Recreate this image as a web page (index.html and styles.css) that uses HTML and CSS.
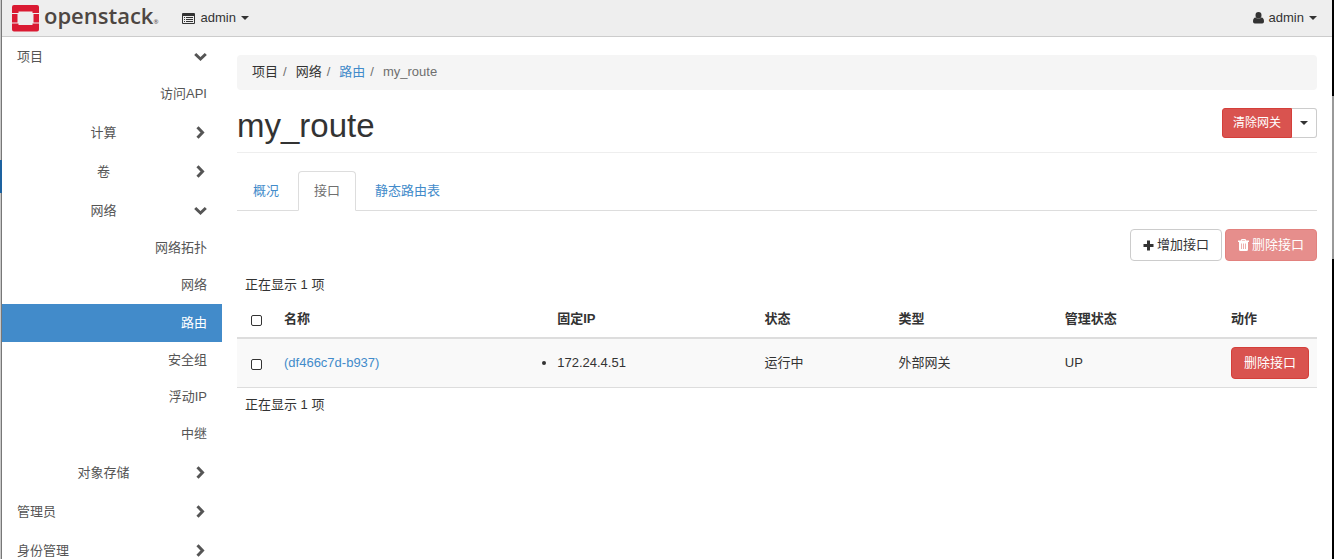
FILE: index.html
```html
<!DOCTYPE html>
<html lang="zh-CN">
<head>
    <meta charset="UTF-8">
    <meta name="viewport" content="width=device-width, initial-scale=1.0">
    <title>my_route - OpenStack Dashboard</title>
    <link rel="stylesheet" href="styles.css">
</head>
<body>
    <!-- shared icons -->
    <svg class="sprite" aria-hidden="true">
        <symbol id="chevron-down" viewBox="0 0 13 13">
            <path d="M1.2 4 L6.5 9 L11.8 4" fill="none" stroke="currentColor" stroke-width="3"/>
        </symbol>
        <symbol id="chevron-right" viewBox="0 0 13 13">
            <path d="M3.5 1.2 L8.5 6.5 L3.5 11.8" fill="none" stroke="currentColor" stroke-width="3"/>
        </symbol>
    </svg>

    <header class="navbar">
        <a href="#" class="brand" aria-label="openstack">
            <svg class="brand-mark" width="27" height="27" viewBox="0 0 27 27">
                <path fill="#da1a32" d="M2 0H25Q27 0 27 2V8H20.500V6.500H6.500V8H0V2Q0 0 2 0ZM0 18.500H6.500V20H20.500V18.500H27V24.500Q27 26.500 25 26.500H2Q0 26.500 0 24.500ZM0 9H5.500V17.500H0ZM21.500 9H27V17.500H21.500Z"/>
            </svg>
            <span class="brand-name">openstack<small>®</small></span>
        </a>
        <button type="button" class="nav-btn">
            <svg width="13" height="11" viewBox="0 0 13 11">
                <path fill="currentColor" fill-rule="evenodd" d="M1 0H12Q13 0 13 1V10Q13 11 12 11H1Q0 11 0 10V1Q0 0 1 0ZM1 3V10H12V3ZM2 4H3V5H2ZM4 4H11V5H4ZM2 6H3V7H2ZM4 6H11V7H4ZM2 8H3V9H2ZM4 8H11V9H4Z"/>
            </svg>
            admin <span class="caret"></span>
        </button>
        <button type="button" class="nav-btn nav-user">
            <svg width="11" height="12" viewBox="0 0 11 12">
                <path fill="currentColor" d="M5.500 0A3 3.200 0 1 1 5.500 6.400A3 3.200 0 1 1 5.500 0ZM2.600 5.500Q5.500 8.200 8.400 5.500Q11 5.800 11 9.500Q11 11.500 9.200 11.500H1.800Q0 11.500 0 9.500Q0 5.800 2.600 5.500Z"/>
            </svg>
            admin <span class="caret"></span>
        </button>
    </header>

    <div class="wrapper">
        <nav class="sidebar">
            <a href="#" class="group">项目<svg class="chevron"><use href="#chevron-down"/></svg></a>
            <a href="#" class="panel">访问API</a>
            <a href="#" class="group sub"><span>计算</span><svg class="chevron"><use href="#chevron-right"/></svg></a>
            <a href="#" class="group sub"><span>卷</span><svg class="chevron"><use href="#chevron-right"/></svg></a>
            <a href="#" class="group sub"><span>网络</span><svg class="chevron"><use href="#chevron-down"/></svg></a>
            <a href="#" class="panel">网络拓扑</a>
            <a href="#" class="panel">网络</a>
            <a href="#" class="panel active">路由</a>
            <a href="#" class="panel">安全组</a>
            <a href="#" class="panel">浮动IP</a>
            <a href="#" class="panel">中继</a>
            <a href="#" class="group sub"><span>对象存储</span><svg class="chevron"><use href="#chevron-right"/></svg></a>
            <a href="#" class="group">管理员<svg class="chevron"><use href="#chevron-right"/></svg></a>
            <a href="#" class="group">身份管理<svg class="chevron"><use href="#chevron-right"/></svg></a>
        </nav>

        <main class="content">
            <ol class="breadcrumb">
                <li>项目</li>
                <li>网络</li>
                <li><a href="#">路由</a></li>
                <li class="current">my_route</li>
            </ol>

            <div class="page-header">
                <h1>my_route</h1>
                <div class="btn-group">
                    <button type="button" class="btn btn-danger btn-sm">清除网关</button>
                    <button type="button" class="btn btn-sm btn-toggle" aria-label="更多"><span class="caret"></span></button>
                </div>
            </div>

            <div class="tabs">
                <a href="#" class="tab">概况</a>
                <a href="#" class="tab active">接口</a>
                <a href="#" class="tab">静态路由表</a>
            </div>

            <div class="table-actions">
                <button type="button" class="btn">
                    <svg width="11" height="11" viewBox="0 0 11 11"><path fill="currentColor" d="M4 0.500H7V4H10.500V7H7V10.500H4V7H0.500V4H4Z"/></svg>
                    增加接口
                </button>
                <button type="button" class="btn btn-danger" disabled>
                    <svg width="11" height="12" viewBox="0 0 11 12"><path fill="currentColor" fill-rule="evenodd" d="M3.500 0H7.500L8.200 1.500H11V3H10V10.500Q10 12 8.500 12H2.500Q1 12 1 10.500V3H0V1.500H2.800ZM4 1L3.800 1.500H7.200L7 1ZM3 4.500V10H3.700V4.500ZM5.200 4.500V10H5.900V4.500ZM7.300 4.500V10H8V4.500Z"/></svg>
                    删除接口
                </button>
            </div>

            <p class="count">正在显示 1 项</p>
            <table>
                <colgroup>
                    <col class="col-check">
                    <col class="col-name">
                    <col class="col-ip">
                    <col class="col-status">
                    <col class="col-type">
                    <col class="col-admin">
                    <col class="col-action">
                </colgroup>
                <thead>
                    <tr>
                        <th><input type="checkbox" aria-label="全选"></th>
                        <th>名称</th>
                        <th>固定IP</th>
                        <th>状态</th>
                        <th>类型</th>
                        <th>管理状态</th>
                        <th>动作</th>
                    </tr>
                </thead>
                <tbody>
                    <tr>
                        <td><input type="checkbox" aria-label="选择 df466c7d-b937"></td>
                        <td><a href="#">(df466c7d-b937)</a></td>
                        <td><ul><li>172.24.4.51</li></ul></td>
                        <td>运行中</td>
                        <td>外部网关</td>
                        <td>UP</td>
                        <td><button type="button" class="btn btn-danger">删除接口</button></td>
                    </tr>
                </tbody>
            </table>
            <p class="count">正在显示 1 项</p>
        </main>
    </div>
</body>
</html>
```
FILE: styles.css
```css
* { margin: 0; padding: 0; box-sizing: border-box; }
html {
    height: 100%;
    overflow: hidden;
    background:
        linear-gradient(#1d62a0, #1d62a0) 0 160px / 2px 33px no-repeat,
        linear-gradient(to right, #c8c8c8 1px, #777 1px) 0 0 / 2px 100% no-repeat,
        linear-gradient(#000 96px, #999 96px, #999 259px, #000 259px) right top / 2px 100% no-repeat;
}
body {
    min-height: 100%;
    margin: 0 2px;
    background: #fff;
    color: #333;
    font-family: "Liberation Sans", "Noto Sans CJK SC", sans-serif;
    font-size: 13px;
    line-height: 18px;
}
a { color: #428bca; text-decoration: none; }
button { font: inherit; color: inherit; cursor: pointer; }
.sprite { display: none; }

/* top bar */
.navbar {
    display: flex;
    align-items: center;
    height: 37px;
    padding: 0 15px 0 10px;
    background: #eee;
    border-bottom: 1px solid #ccc;
}
.brand { display: flex; align-items: center; gap: 5px; color: #4d4642; }
.brand-name {
    font-family: "Open Sans", sans-serif;
    font-size: 22px;
    font-weight: 600;
    line-height: 32px;
}
.brand-name small { font-size: 6px; font-weight: normal; }
.nav-btn {
    display: flex;
    align-items: center;
    gap: 5px;
    margin-left: 24px;
    background: none;
    border: none;
}
.nav-user { margin-left: auto; }
.caret {
    display: inline-block;
    border-top: 4px solid;
    border-left: 4px solid transparent;
    border-right: 4px solid transparent;
}

.wrapper { display: flex; align-items: flex-start; }

/* side menu */
.sidebar { flex: 0 0 220px; }
.sidebar a { color: #555; }
.group {
    display: flex;
    align-items: center;
    justify-content: space-between;
    height: 39px;
    padding: 0 15px;
}
.sub span { flex: 1; padding-right: 4px; text-align: center; }
.chevron { width: 13px; height: 13px; }
.panel {
    display: block;
    padding: 9px 15px 10px;
    text-align: right;
}
.sidebar .active { padding-top: 10px; background: #428bca; color: #fff; }

/* main column */
.content { flex: 1; padding: 18px 15px; }
.breadcrumb {
    display: flex;
    height: 35px;
    margin-bottom: 18px;
    padding: 8px 15px;
    background: #f5f5f5;
    border-radius: 4px;
    list-style: none;
}
.breadcrumb li + li::before { content: "/"; padding: 0 9px 0 5px; color: #6f6f6f; }
.breadcrumb .current { color: #6f6f6f; }
.page-header {
    display: flex;
    justify-content: space-between;
    align-items: flex-start;
    height: 45px;
    margin-bottom: 18px;
    border-bottom: 1px solid #eee;
}
h1 { font-size: 33px; font-weight: normal; line-height: 36px; }

.btn {
    display: inline-flex;
    align-items: center;
    gap: 3px;
    height: 32px;
    padding: 0 12px;
    background: #fff;
    border: 1px solid #ccc;
    border-radius: 4px;
}
.btn-danger { background: #d9534f; border-color: #d43f3a; color: #fff; }
.btn:disabled { opacity: 0.65; cursor: not-allowed; }
.btn-sm { height: 30px; padding: 0 10px; font-size: 12px; }
.btn-group { display: flex; }
.btn-group .btn-danger { border-radius: 3px 0 0 3px; }
.btn-toggle { padding: 0 8px; border-left: none; border-radius: 0 3px 3px 0; }

.tabs { display: flex; gap: 3px; border-bottom: 1px solid #ddd; }
.tab {
    height: 40px;
    margin-bottom: -1px;
    padding: 10px 15px;
    border: 1px solid transparent;
    border-radius: 4px 4px 0 0;
}
.tab.active { background: #fff; border-color: #ddd #ddd #fff; color: #6f6f6f; }

.table-actions {
    display: flex;
    justify-content: flex-end;
    gap: 3px;
    margin: 18px 0 7px;
}

/* interfaces table */
.count { padding: 8px 8px 6px; }
table { width: 100%; table-layout: fixed; border-collapse: collapse; }
th, td { padding: 8px; text-align: left; vertical-align: middle; }
th { height: 38px; border-bottom: 2px solid #ddd; }
td { height: 49px; background: #f9f9f9; border-bottom: 1px solid #ddd; }
th:first-child, td:first-child { padding-left: 14px; }
td ul { list-style: disc; }
.col-check { width: 39px; }
.col-name { width: 25.300%; }
.col-ip { width: 19.200%; }
.col-status { width: 12.400%; }
.col-type { width: 15.400%; }
.col-action { width: 94px; }
input[type="checkbox"] {
    appearance: none;
    display: block;
    width: 11px;
    height: 11px;
    margin-top: 3px;
    background: #fff;
    border: 1px solid #333;
    border-radius: 2px;
}
```
